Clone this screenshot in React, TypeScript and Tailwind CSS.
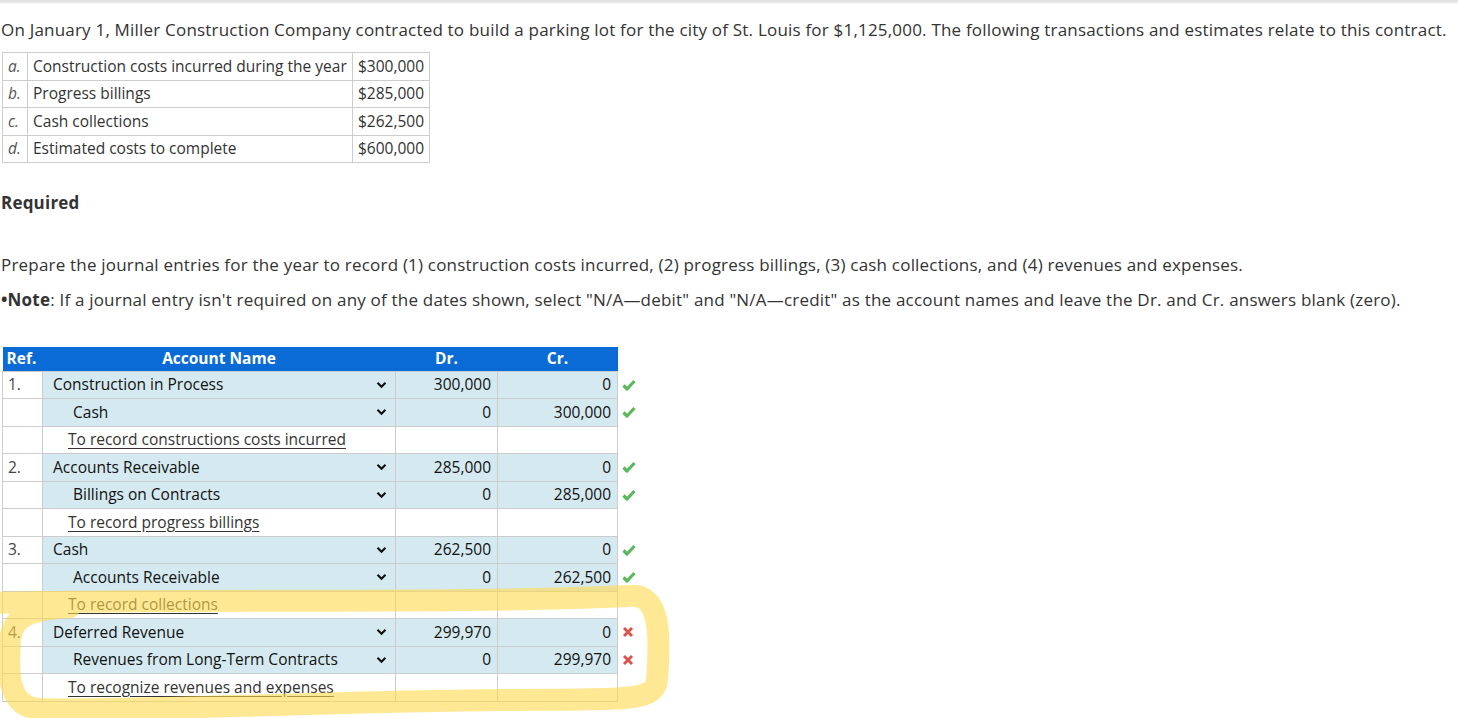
import React from "react";

type Entry = {
	ref: string;
	lines: { name: string; dr: string; cr: string; ok: boolean }[];
	desc: string;
};

const facts = [
	{ letter: "a.", label: "Construction costs incurred during the year", amount: "$300,000" },
	{ letter: "b.", label: "Progress billings", amount: "$285,000" },
	{ letter: "c.", label: "Cash collections", amount: "$262,500" },
	{ letter: "d.", label: "Estimated costs to complete", amount: "$600,000" },
];

const entries: Entry[] = [
	{
		ref: "1.",
		lines: [
			{ name: "Construction in Process", dr: "300,000", cr: "0", ok: true },
			{ name: "Cash", dr: "0", cr: "300,000", ok: true },
		],
		desc: "To record constructions costs incurred",
	},
	{
		ref: "2.",
		lines: [
			{ name: "Accounts Receivable", dr: "285,000", cr: "0", ok: true },
			{ name: "Billings on Contracts", dr: "0", cr: "285,000", ok: true },
		],
		desc: "To record progress billings",
	},
	{
		ref: "3.",
		lines: [
			{ name: "Cash", dr: "262,500", cr: "0", ok: true },
			{ name: "Accounts Receivable", dr: "0", cr: "262,500", ok: true },
		],
		desc: "To record collections",
	},
	{
		ref: "4.",
		lines: [
			{ name: "Deferred Revenue", dr: "299,970", cr: "0", ok: false },
			{ name: "Revenues from Long-Term Contracts", dr: "0", cr: "299,970", ok: false },
		],
		desc: "To recognize revenues and expenses",
	},
];

function Chevron() {
	return (
		<svg width="11" height="8" viewBox="0 0 11 8" className="shrink-0">
			<path d="M1.5 1.8 L5.5 5.8 L9.5 1.8" fill="none" stroke="#111" strokeWidth="2.2" />
		</svg>
	);
}

function Mark({ ok }: { ok: boolean }) {
	if (ok)
		return (
			<svg width="14" height="12" viewBox="0 0 14 12">
				<path d="M1.5 6.5 L5 10 L12.5 2" fill="none" stroke="#5cb85c" strokeWidth="3.2" strokeLinejoin="round" />
			</svg>
		);
	return (
		<svg width="12" height="12" viewBox="0 0 12 12">
			<path d="M2 2 L10 10 M10 2 L2 10" fill="none" stroke="#d9534f" strokeWidth="3" />
		</svg>
	);
}

function App() {
	return (
		<div className="relative min-h-screen bg-white text-[#333] font-['Open_Sans',sans-serif]">
			<div className="h-[2px] bg-[#e3e3e3] shadow-[0_1px_2px_rgba(0,0,0,0.12)]" />
			<main className="pl-[1px]">
				<p className="mt-[16px] text-[17px] tracking-[0.2px] leading-[24px]">
					On January 1, Miller Construction Company contracted to build a parking lot for the city of St. Louis for $1,125,000. The following transactions and estimates relate to this contract.
				</p>

				<table className="mt-[10px] ml-[1px] border-collapse text-[15.5px]">
					<tbody>
						{facts.map((f) => (
							<tr key={f.letter} className="h-[27.5px]">
								<td className="border border-[#ccc] w-[25px] px-[5px] italic text-[#555]">{f.letter}</td>
								<td className="border border-[#ccc] w-[325px] px-[5px] text-[#333]">{f.label}</td>
								<td className="border border-[#ccc] w-[77px] px-[5px] text-right text-[#333]">{f.amount}</td>
							</tr>
						))}
					</tbody>
				</table>

				<p className="mt-[28px] text-[17px] tracking-[0.2px] leading-[24px] font-bold">Required</p>
				<p className="mt-[38px] text-[17px] tracking-[0.2px] leading-[24px]">
					Prepare the journal entries for the year to record (1) construction costs incurred, (2) progress billings, (3) cash collections, and (4) revenues and expenses.
				</p>
				<p className="mt-[11px] text-[17px] tracking-[0.2px] leading-[24px]">
					<span className="font-bold">•Note</span>: If a journal entry isn't required on any of the dates shown, select "N/A—debit" and "N/A—credit" as the account names and leave the Dr. and Cr. answers blank (zero).
				</p>

				<table className="mt-[35px] ml-[1px] border-collapse text-[15.5px] text-[#111]">
					<thead>
						<tr className="h-[24px] text-white font-bold">
							<th className="bg-[#0b6bd6] w-[40px] pl-[4px] text-left">Ref.</th>
							<th className="bg-[#0b6bd6] w-[353px] text-center">Account Name</th>
							<th className="bg-[#0b6bd6] w-[102px] text-center">Dr.</th>
							<th className="bg-[#0b6bd6] w-[120px] text-center">Cr.</th>
							<th className="w-[24px]" />
						</tr>
					</thead>
					<tbody>
						{entries.map((e) => (
							<React.Fragment key={e.ref}>
								{e.lines.map((l, i) => (
									<tr key={l.name + i} className="h-[27.5px]">
										<td className="border border-[#ccc] bg-white pl-[5px] text-[#444]">{i === 0 ? e.ref : ""}</td>
										<td className="border border-[#ccc] bg-[#d5eaf0]">
											<div className={`flex items-center justify-between pr-[8px] ${i === 0 ? "pl-[10px]" : "pl-[30px]"}`}>
												<span>{l.name}</span>
												<Chevron />
											</div>
										</td>
										<td className="border border-[#ccc] bg-[#d5eaf0] text-right pr-[6px]">{l.dr}</td>
										<td className="border border-[#ccc] bg-[#d5eaf0] text-right pr-[6px]">{l.cr}</td>
										<td className="pl-[4px] align-middle">
											<div className="flex items-center">
												<Mark ok={l.ok} />
											</div>
										</td>
									</tr>
								))}
								<tr className="h-[27.5px]">
									<td className="border border-[#ccc]" />
									<td className="border border-[#ccc] pl-[25px] text-[#333]">
										<span className="underline underline-offset-[3px]">{e.desc}</span>
									</td>
									<td className="border border-[#ccc]" />
									<td className="border border-[#ccc]" />
									<td />
								</tr>
							</React.Fragment>
						))}
					</tbody>
				</table>
			</main>

			<svg className="pointer-events-none absolute left-0 top-0" width="1458" height="718">
				<path
					d="M -10 603 C 200 598, 450 604, 630 596 C 662 593, 660 640, 657 680 C 655 703, 620 699, 500 700 C 300 702, 120 712, 40 709 C 6 707, 8 670, 10 640 C 12 620, 22 610, 70 607"
					fill="none"
					stroke="#ffd84d"
					strokeOpacity="0.6"
					strokeWidth="22"
					strokeLinecap="round"
					strokeLinejoin="round"
				/>
			</svg>
		</div>
	);
}

export default App;
